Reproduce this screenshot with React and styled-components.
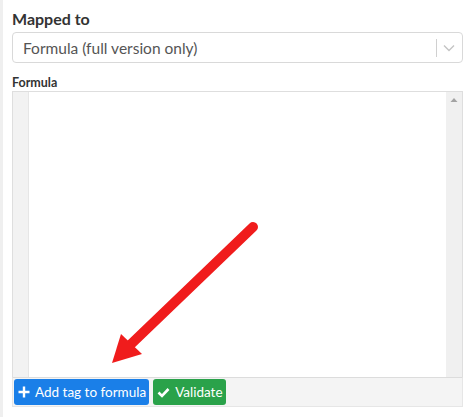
import React from "react";
import styled, {createGlobalStyle} from "styled-components";

const GlobalStyle = createGlobalStyle`
    body {
        margin: 0;
        background: #fff;
        font-family: Lato, "Open Sans", Arial, sans-serif;
    }
`;

export default function App() {
    return (
        <>
            <GlobalStyle/>
            <Page>
                <Label>Mapped to</Label>
                <Select>
                    <span>Formula (full version only)</span>
                    <Indicator>
                        <Separator/>
                        <svg width="14" height="10" viewBox="0 0 14 10">
                            <path d="M2 2.5 L7 7.5 L12 2.5" fill="none" stroke="#c4c4c4" strokeWidth="1.4"/>
                        </svg>
                    </Indicator>
                </Select>

                <SmallLabel>Formula</SmallLabel>
                <Editor>
                    <Gutter/>
                    <Area/>
                    <Scrollbar>
                        <svg width="8" height="6" viewBox="0 0 8 6">
                            <path d="M0.5 5 L4 1 L7.5 5 Z" fill="#a3a3a3"/>
                        </svg>
                    </Scrollbar>
                    <Arrow width="474" height="418" viewBox="0 0 474 418">
                        <line x1="253" y1="227" x2="128" y2="347" stroke="#f01c1c" strokeWidth="10" strokeLinecap="round"/>
                        <polygon points="112,363 121,334 142,354" fill="#f01c1c"/>
                    </Arrow>
                </Editor>
                <Toolbar>
                    <Button $color="#1a7fe8">
                        <svg width="12" height="12" viewBox="0 0 12 12">
                            <path d="M6 0.5 V11.5 M0.5 6 H11.5" stroke="#fff" strokeWidth="2.4"/>
                        </svg>
                        Add tag to formula
                    </Button>
                    <Button $color="#2aa24a">
                        <svg width="13" height="11" viewBox="0 0 13 11">
                            <path d="M1.5 5.5 L5 9 L11.5 2" fill="none" stroke="#fff" strokeWidth="2.6"/>
                        </svg>
                        Validate
                    </Button>
                </Toolbar>
            </Page>
        </>
    );
}

const Page = styled.div`
    position: relative;
    border-left: 3px solid #efefef;
    padding: 8px 11px 10px 9px;
    min-height: 400px;
    box-sizing: border-box;
`;

const Label = styled.div`
    font-size: 16px;
    font-weight: 700;
    color: #333;
    line-height: 22px;
    margin-bottom: 2px;
`;

const Select = styled.div`
    display: flex;
    align-items: center;
    justify-content: space-between;
    height: 31px;
    box-sizing: border-box;
    border: 1px solid #d9d9d9;
    border-radius: 4px;
    padding: 0 0 0 10px;
    font-size: 15.5px;
    color: #555;
`;

const Indicator = styled.div`
    display: flex;
    align-items: center;
    gap: 5px;
    padding-right: 6px;
`;

const Separator = styled.span`
    width: 1px;
    height: 18px;
    background: #d0d0d0;
`;

const SmallLabel = styled.div`
    font-size: 12.5px;
    font-weight: 700;
    color: #333;
    margin-top: 12px;
    line-height: 16px;
`;

const Editor = styled.div`
    display: flex;
    height: 286px;
    box-sizing: border-box;
    border: 1px solid #dedede;
    border-bottom: none;
`;

const Gutter = styled.div`
    width: 15px;
    background: #f2f2f2;
    border-right: 1px solid #e6e6e6;
`;

const Area = styled.div`
    flex: 1;
    background: #fff;
`;

const Scrollbar = styled.div`
    width: 16px;
    background: #f0f0f0;
    display: flex;
    justify-content: center;
    padding-top: 5px;
    box-sizing: border-box;
`;

const Arrow = styled.svg`
    position: absolute;
    left: -3px;
    top: 0;
    pointer-events: none;
`;

const Toolbar = styled.div`
    display: flex;
    gap: 4px;
    height: 30px;
    box-sizing: border-box;
    padding: 1px;
    background: #f4f4f4;
    border: 1px solid #e6e6e6;
    border-top: 1px solid #dcdcdc;
`;

const Button = styled.button`
    display: flex;
    align-items: center;
    gap: 5px;
    height: 26px;
    padding: 0 3px 0 4px;
    border: none;
    border-radius: 3px;
    background: ${p => p.$color};
    color: #fff;
    font-family: Lato, "Open Sans", Arial, sans-serif;
    font-size: 13.5px;
`;
